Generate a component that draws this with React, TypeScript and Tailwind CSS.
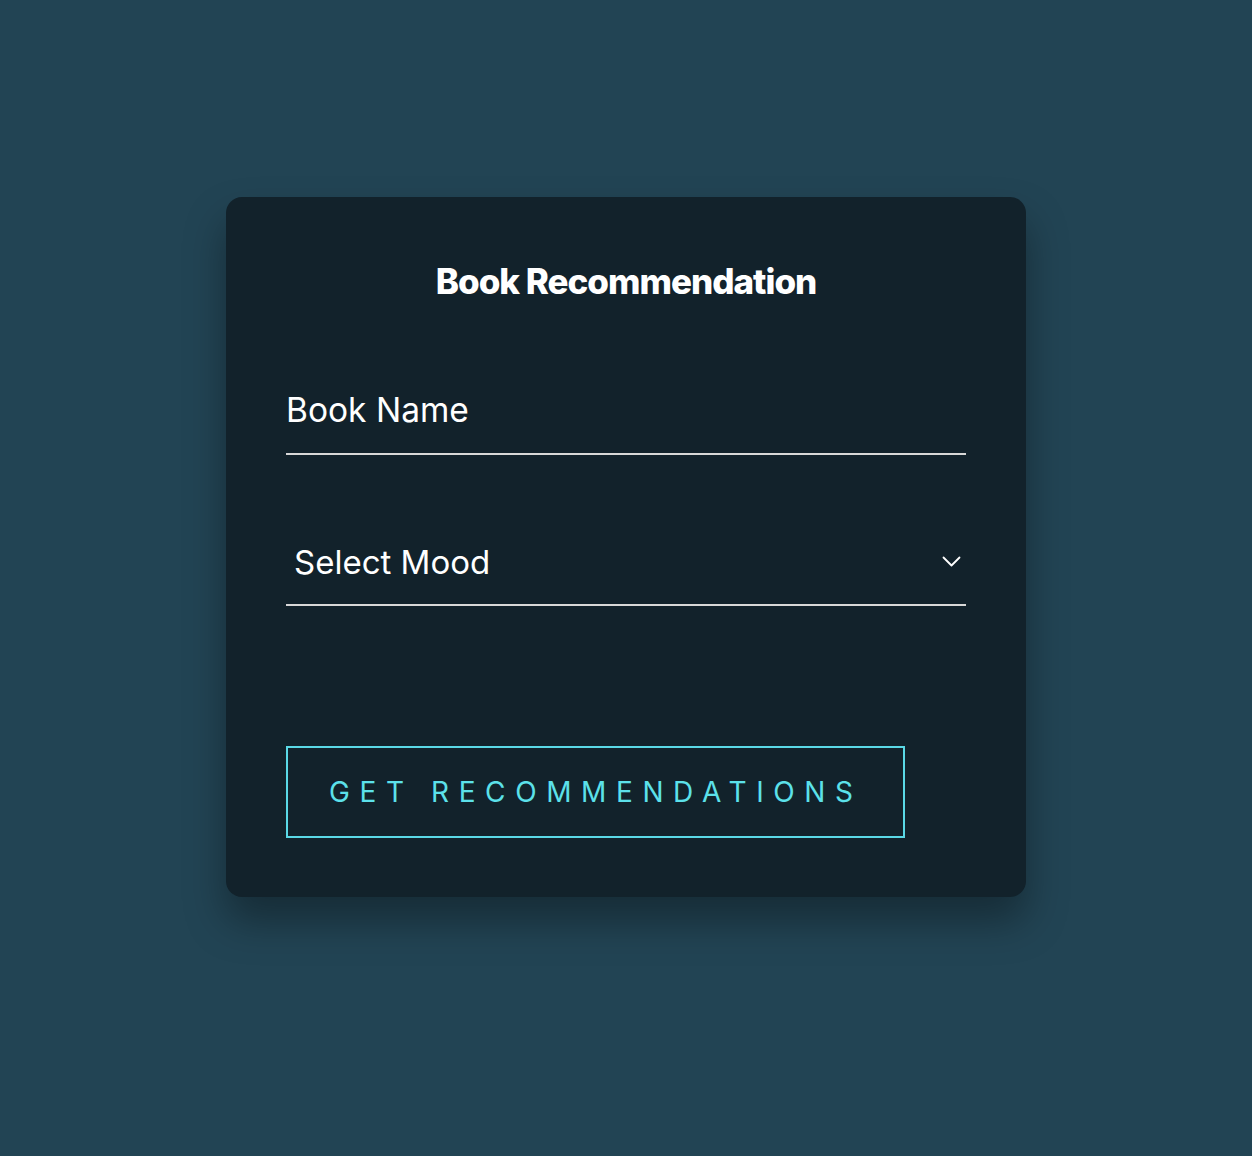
import { useState } from "react";

const font = { fontFamily: "Inter, 'Noto Sans', sans-serif" };

function Chevron() {
  return (
    <svg width="19" height="12" viewBox="0 0 19 12" fill="none" className="pointer-events-none absolute right-[5px] top-[20px]">
      <polyline points="1.5,1.5 9.5,9.5 17.5,1.5" stroke="white" strokeWidth="1.8" strokeLinecap="round" strokeLinejoin="round" />
    </svg>
  );
}

export default function App() {
  const [book, setBook] = useState("");
  const [mood, setMood] = useState("");

  return (
    <div className="flex min-h-screen justify-center bg-[#224454] pt-[197px]" style={font}>
      <div className="h-[700px] w-[800px] rounded-2xl bg-[#12222b] px-[60px] pt-[64px] shadow-[0_24px_40px_rgba(0,0,0,0.35)]">
        <h2 className="text-center text-[35px] leading-[40px] font-extrabold tracking-[-1px] text-white">
          Book Recommendation
        </h2>

        <div className="mt-[85px]">
          <input
            value={book}
            onChange={(e) => setBook(e.target.value)}
            placeholder="Book Name"
            className="h-[69px] w-full border-b-2 border-[#d8d8d8] bg-transparent pt-[4px] pb-[23px] text-[33.5px] leading-[40px] text-white outline-none placeholder:text-white"
          />
        </div>

        <div className="relative mt-[81px]">
          <select
            value={mood}
            onChange={(e) => setMood(e.target.value)}
            className="h-[70px] w-full appearance-none border-b-2 border-[#d8d8d8] bg-transparent pt-[6px] pb-[22px] pl-2 text-[33px] leading-[40px] text-white outline-none"
          >
            <option value="">Select Mood</option>
            <option value="happy">Happy</option>
            <option value="sad">Sad</option>
            <option value="adventurous">Adventurous</option>
          </select>
          <Chevron />
        </div>

        <button className="mt-[140px] flex h-[92px] w-[619px] items-center border-2 border-[#5ad9e6] pl-[41px] text-[28px] tracking-[9.6px] text-[#5ce1ea]">
          GET RECOMMENDATIONS
        </button>
      </div>
    </div>
  );
}
